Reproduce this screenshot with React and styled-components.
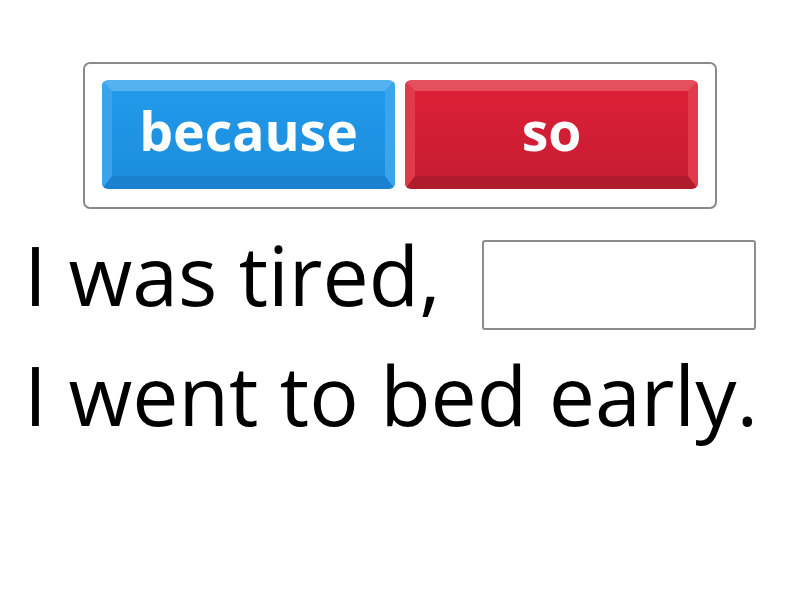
import React from "react";
import styled, { createGlobalStyle } from "styled-components";

const Global = createGlobalStyle`
  html, body { margin: 0; padding: 0; background: #fff; }
  body { font-family: "Open Sans", "Noto Sans", sans-serif; }
`;

const Page = styled.div`
  width: 800px;
  height: 600px;
  display: flex;
  flex-direction: column;
  align-items: center;
  padding-top: 62px;
  box-sizing: border-box;
`;

const Bank = styled.div`
  width: 634px;
  height: 147px;
  box-sizing: border-box;
  border: 2px solid #8a8a8a;
  border-radius: 7px;
  padding: 16px 17px;
  display: flex;
  gap: 10px;
`;

const palettes = {
  blue: { face: "#2299e9", top: "#55b2f0", side: "#3aa4ed", bottom: "#1b82d2", faceEnd: "#1d8ede" },
  red: { face: "#dc1f37", top: "#e5505f", side: "#e03a4c", bottom: "#b01b2d", faceEnd: "#c81d33" },
};

const Tile = styled.div`
  flex: 1;
  height: 109px;
  box-sizing: border-box;
  border-radius: 6px;
  border-style: solid;
  border-width: 11px 10px 13px 10px;
  border-color: ${(p) => palettes[p.$c].top} ${(p) => palettes[p.$c].side}
    ${(p) => palettes[p.$c].bottom} ${(p) => palettes[p.$c].side};
  background: linear-gradient(${(p) => palettes[p.$c].face}, ${(p) => palettes[p.$c].faceEnd});
  display: flex;
  align-items: center;
  justify-content: center;
  color: #fff;
  font-weight: 700;
  font-size: 53.5px;
  line-height: 1;
  padding-bottom: 5px;
`;

const Sentence = styled.div`
  width: 800px;
  box-sizing: border-box;
  padding: 0 0 0 24px;
  font-size: 82.4px;
  color: #000;
  display: flex;
  flex-direction: column;
`;

const Line = styled.div`
  display: flex;
  align-items: center;
  height: ${(p) => p.$h}px;
  white-space: nowrap;
`;

const Blank = styled.div`
  align-self: flex-start;
  width: 274px;
  height: 90px;
  box-sizing: border-box;
  border: 2px solid #8c8c8c;
  border-radius: 3px;
  margin-left: 41px;
  margin-top: 31px;
`;

export default function App() {
  return (
    <>
      <Global />
      <Page>
        <Bank>
          <Tile $c="blue">because</Tile>
          <Tile $c="red">so</Tile>
        </Bank>
        <Sentence>
          <Line $h={130}>
            I was tired,<Blank />
          </Line>
          <Line $h={110}>I went to bed early.</Line>
        </Sentence>
      </Page>
    </>
  );
}
